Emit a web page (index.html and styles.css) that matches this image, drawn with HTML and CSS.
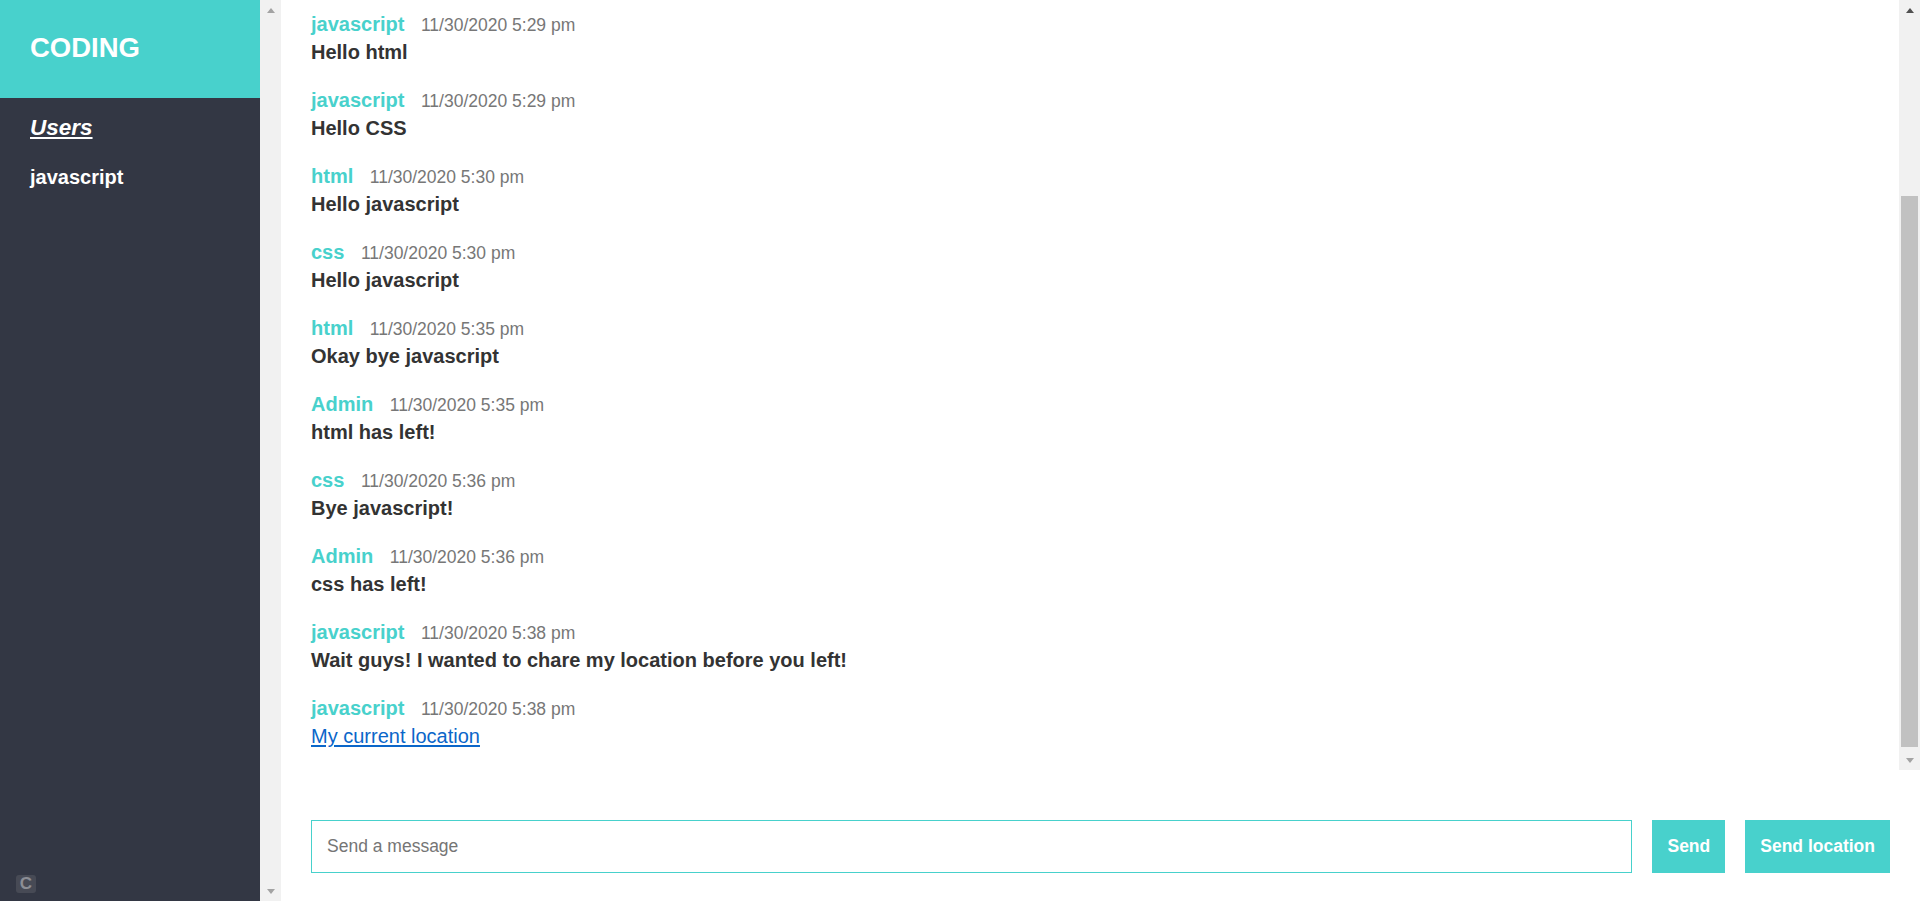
FILE: index.html
```
<!DOCTYPE html>
<html lang="en">
<head>
<meta charset="utf-8">
<title>Chat App</title>
<link rel="stylesheet" href="styles.css">
</head>
<body>
<div class="app">
  <aside class="sidebar">
    <div class="room-title">CODING</div>
    <h3 class="list-title">Users</h3>
    <ul class="users">
      <li>javascript</li>
    </ul>
    <div class="ext-badge">C</div>
  </aside>
  <div class="scrollbar scrollbar--side">
    <span class="arrow arrow--up arrow--disabled"></span>
    <span class="track"></span>
    <span class="arrow arrow--down arrow--disabled"></span>
  </div>
  <main class="chat">
    <div class="messages-wrap">
      <div class="messages">
        <div class="message">
          <p class="meta"><span class="name">javascript</span><span class="time">11/30/2020 5:29 pm</span></p>
          <p class="text">Hello html</p>
        </div>
        <div class="message">
          <p class="meta"><span class="name">javascript</span><span class="time">11/30/2020 5:29 pm</span></p>
          <p class="text">Hello CSS</p>
        </div>
        <div class="message">
          <p class="meta"><span class="name">html</span><span class="time">11/30/2020 5:30 pm</span></p>
          <p class="text">Hello javascript</p>
        </div>
        <div class="message">
          <p class="meta"><span class="name">css</span><span class="time">11/30/2020 5:30 pm</span></p>
          <p class="text">Hello javascript</p>
        </div>
        <div class="message">
          <p class="meta"><span class="name">html</span><span class="time">11/30/2020 5:35 pm</span></p>
          <p class="text">Okay bye javascript</p>
        </div>
        <div class="message">
          <p class="meta"><span class="name">Admin</span><span class="time">11/30/2020 5:35 pm</span></p>
          <p class="text">html has left!</p>
        </div>
        <div class="message">
          <p class="meta"><span class="name">css</span><span class="time">11/30/2020 5:36 pm</span></p>
          <p class="text">Bye javascript!</p>
        </div>
        <div class="message">
          <p class="meta"><span class="name">Admin</span><span class="time">11/30/2020 5:36 pm</span></p>
          <p class="text">css has left!</p>
        </div>
        <div class="message">
          <p class="meta"><span class="name">javascript</span><span class="time">11/30/2020 5:38 pm</span></p>
          <p class="text">Wait guys! I wanted to chare my location before you left!</p>
        </div>
        <div class="message">
          <p class="meta"><span class="name">javascript</span><span class="time">11/30/2020 5:38 pm</span></p>
          <p class="link-line"><a class="location-link" href="#">My current location</a></p>
        </div>
      </div>
      <div class="scrollbar scrollbar--main">
        <span class="arrow arrow--up"></span>
        <span class="track"><span class="thumb"></span></span>
        <span class="arrow arrow--down arrow--disabled"></span>
      </div>
    </div>
    <div class="compose">
      <form class="compose-form">
        <input class="compose-input" type="text" placeholder="Send a message">
        <button class="btn" type="button">Send</button>
      </form>
      <button class="btn" type="button">Send location</button>
    </div>
  </main>
</div>
</body>
</html>
```

FILE: styles.css
```
* {
  box-sizing: border-box;
}

html, body {
  margin: 0;
  padding: 0;
  height: 100%;
}

body {
  font-family: "Liberation Sans", Arial, sans-serif;
  color: #333;
  background: #fff;
  overflow: hidden;
}

.app {
  display: flex;
  height: 901px;
}

/* Sidebar */
.sidebar {
  position: relative;
  width: 260px;
  flex-shrink: 0;
  background: #333744;
  color: #fff;
}

.room-title {
  background: #48d1cc;
  color: #fff;
  font-weight: 700;
  font-size: 27.5px;
  line-height: 28px;
  height: 98px;
  padding: 34px 30px 36px;
}

.list-title {
  margin: 16px 0 0;
  padding: 0 30px;
  font-size: 22.5px;
  line-height: 28px;
  font-weight: 700;
  font-style: italic;
  text-decoration: underline;
  text-underline-offset: 2px;
}

.users {
  list-style: none;
  margin: 21px 0 0;
  padding: 0 30px;
  font-size: 20px;
  line-height: 28px;
  font-weight: 700;
}

.ext-badge {
  position: absolute;
  left: 16px;
  top: 875px;
  width: 20px;
  height: 18px;
  border-radius: 3px;
  background: #474a55;
  color: #8c8e95;
  font-size: 17px;
  font-weight: 700;
  line-height: 18px;
  text-align: center;
}

/* Scrollbars */
.scrollbar {
  width: 21px;
  flex-shrink: 0;
  background: #f1f1f1;
  display: flex;
  flex-direction: column;
}

.scrollbar--side {
  height: 901px;
}

.scrollbar--main {
  height: 770px;
}

.arrow {
  height: 21px;
  flex-shrink: 0;
  display: flex;
  align-items: center;
  justify-content: center;
}

.arrow::before {
  content: "";
  width: 0;
  height: 0;
  border-left: 4.5px solid transparent;
  border-right: 4.5px solid transparent;
}

.arrow--up::before {
  border-bottom: 5px solid #505050;
  margin-top: -1px;
}

.arrow--down::before {
  border-top: 5px solid #505050;
  margin-top: 1px;
}

.arrow--up.arrow--disabled::before {
  border-bottom-color: #a3a3a3;
}

.arrow--down.arrow--disabled::before {
  border-top-color: #a3a3a3;
}

.track {
  flex: 1;
  display: flex;
  flex-direction: column;
  justify-content: flex-end;
  padding: 0 2px 2px;
}

.thumb {
  height: 551px;
  background: #c1c1c1;
}

/* Chat */
.chat {
  flex: 1;
  display: flex;
  flex-direction: column;
  min-width: 0;
}

.messages-wrap {
  display: flex;
  height: 770px;
  flex-shrink: 0;
}

.messages {
  flex: 1;
  display: flex;
  flex-direction: column;
  justify-content: flex-end;
  overflow: hidden;
  padding: 0 30px;
}

.message {
  flex-shrink: 0;
  margin-bottom: 20px;
}

.meta,
.text,
.link-line {
  margin: 0;
  height: 28px;
  font-size: 20px;
  line-height: 28px;
}

.name {
  color: #48d1cc;
  font-weight: 700;
  margin-right: 16.5px;
}

.time {
  color: #777;
  font-size: 17.5px;
  line-height: 20px;
}

.text {
  font-weight: 700;
  color: #333;
}

.location-link {
  color: #0b66c9;
  text-decoration: underline;
  text-underline-offset: 2px;
}

/* Compose */
.compose {
  display: flex;
  gap: 20px;
  margin-top: 20px;
  padding: 30px 30px 28px;
}

.compose-form {
  flex: 1;
  display: flex;
  gap: 20px;
}

.compose-input {
  flex: 1;
  height: 53px;
  border: 1px solid #48d1cc;
  padding: 0 15px;
  font-family: "Liberation Sans", Arial, sans-serif;
  font-size: 17.5px;
  color: #333;
  outline: none;
}

.compose-input::placeholder {
  color: #757575;
}

.btn {
  height: 53px;
  padding: 0 15px;
  border: none;
  background: #48d1cc;
  color: #fff;
  font-family: "Liberation Sans", Arial, sans-serif;
  font-size: 17.5px;
  font-weight: 700;
  cursor: pointer;
}
```
